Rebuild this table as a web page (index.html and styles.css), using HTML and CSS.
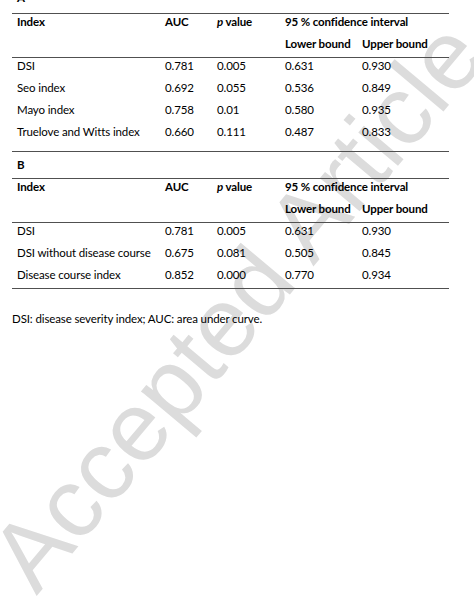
FILE: index.html
```html
<!DOCTYPE html>
<html lang="en">
<head>
<meta charset="utf-8">
<title>ROC table</title>
<link rel="stylesheet" href="styles.css">
</head>
<body>
<div class="page">
  <div class="label label-a">A</div>
  <table class="stats stats-a">
    <colgroup>
      <col class="c1"><col class="c2"><col class="c3"><col class="c4"><col class="c5">
    </colgroup>
    <thead>
      <tr>
        <th rowspan="2">Index</th>
        <th rowspan="2">AUC</th>
        <th rowspan="2"><i>p</i> value</th>
        <th colspan="2">95 % confidence interval</th>
      </tr>
      <tr class="sub">
        <th>Lower bound</th>
        <th>Upper bound</th>
      </tr>
    </thead>
    <tbody>
      <tr><td>DSI</td><td>0.781</td><td>0.005</td><td>0.631</td><td>0.930</td></tr>
      <tr><td>Seo index</td><td>0.692</td><td>0.055</td><td>0.536</td><td>0.849</td></tr>
      <tr><td>Mayo index</td><td>0.758</td><td>0.01</td><td>0.580</td><td>0.935</td></tr>
      <tr class="last"><td>Truelove and Witts index</td><td>0.660</td><td>0.111</td><td>0.487</td><td>0.833</td></tr>
    </tbody>
  </table>
  <div class="label label-b">B</div>
  <table class="stats stats-b">
    <colgroup>
      <col class="c1"><col class="c2"><col class="c3"><col class="c4"><col class="c5">
    </colgroup>
    <thead>
      <tr>
        <th rowspan="2">Index</th>
        <th rowspan="2">AUC</th>
        <th rowspan="2"><i>p</i> value</th>
        <th colspan="2">95 % confidence interval</th>
      </tr>
      <tr class="sub">
        <th>Lower bound</th>
        <th>Upper bound</th>
      </tr>
    </thead>
    <tbody>
      <tr><td>DSI</td><td>0.781</td><td>0.005</td><td>0.631</td><td>0.930</td></tr>
      <tr><td>DSI without disease course</td><td>0.675</td><td>0.081</td><td>0.505</td><td>0.845</td></tr>
      <tr class="last"><td>Disease course index</td><td>0.852</td><td>0.000</td><td>0.770</td><td>0.934</td></tr>
    </tbody>
  </table>
  <p class="note">DSI: disease severity index; AUC: area under curve.</p>
</div>
<div class="wm-layer">
  <div class="watermark">Accepted Article</div>
</div>
</body>
</html>
```
FILE: styles.css
```css
html {
  background: #ffffff;
  overflow: hidden;
}
body {
  margin: 0;
  font-family: Lato, "Open Sans", sans-serif;
  font-size: 11.5px;
  letter-spacing: -0.12px;
  color: #000000;
  position: relative;
  height: 600px;
  overflow: hidden;
}
.page {
  margin-top: -15px;
  padding-left: 12px;
  width: 437px;
}
.label {
  padding-left: 5px;
  font-weight: 700;
}
.label-a {
  height: 28px;
  line-height: 26px;
}
.label-b {
  height: 26px;
  line-height: 26px;
}
.stats {
  width: 437px;
  border-collapse: separate;
  border-spacing: 0;
  table-layout: fixed;
  border-top: 1px solid #505050;
  border-bottom: 1px solid #505050;
}
.stats th,
.stats td {
  text-align: left;
  vertical-align: top;
  line-height: 16px;
  padding: 0 0 6px 5px;
  white-space: nowrap;
}
.stats th {
  font-weight: 700;
}
.stats tr.sub th {
  padding-bottom: 5px;
}
.stats tbody tr:first-child td {
  border-top: 1px solid #505050;
}
.c1 { width: 148px; }
.c2 { width: 52px; }
.c3 { width: 68px; }
.c4 { width: 77px; }
.c5 { width: 92px; }
.stats-a tr.last td {
  padding-bottom: 11px;
}
.stats-b tr.last td {
  padding-bottom: 5px;
}
.note {
  margin: 22px 0 0 0;
  line-height: 16px;
}
.wm-layer {
  position: absolute;
  left: 0;
  top: 0;
  width: 474px;
  height: 600px;
  overflow: hidden;
  z-index: -1;
}
.watermark {
  position: absolute;
  left: -27px;
  top: 543px;
  transform-origin: 0 0;
  transform: rotate(-50deg);
  font-family: "Liberation Sans", Arial, sans-serif;
  font-size: 98px;
  line-height: 1;
  letter-spacing: 0;
  color: #dcdcdc;
  white-space: nowrap;
}
```
